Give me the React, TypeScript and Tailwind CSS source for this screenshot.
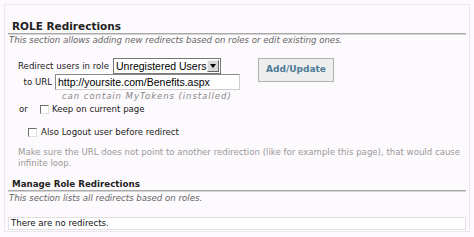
import React from "react";

export default function App() {
  const v = { fontFamily: '"DejaVu Sans", Verdana, sans-serif' };
  const a = { fontFamily: '"Liberation Sans", Arial, sans-serif' };
  return (
    <div className="w-[474px] h-[237px] bg-[#fdfafd] pt-[4px] pl-[4px]" style={v}>
      <div className="w-[466px] h-[228px] border border-[#ebe6eb] pl-[3px] pt-[15px]">
        <div className="text-[10.5px] font-bold text-[#222] pl-[4px] leading-[13px]">ROLE Redirections</div>
        <div className="h-[1px] bg-[#a9a9a9] w-[458px] border-b border-[#d4d4d4] box-content" />
        <div className="text-[8.6px] italic text-[#666] leading-[11px] pl-[1px]">
          This section allows adding new redirects based on roles or edit existing ones.
        </div>
        <div className="flex mt-[12px]">
          <div className="flex flex-col w-[232px]">
            <div className="flex items-center text-[8.6px] text-[#222]">
              <span className="w-[105px] text-right pr-[4px]">Redirect users in role</span>
              <div className="flex items-center h-[16px] w-[108px] border border-[#777] bg-white">
                <span className="flex-1 text-[10.5px] pl-[2px] leading-[14px] text-black" style={a}>Unregistered Users</span>
                <span className="w-[12px] h-[12px] mr-[1px] bg-[#d8d8d8] border border-t-[#f0f0f0] border-l-[#f0f0f0] border-b-[#666] border-r-[#666] flex items-center justify-center">
                  <svg width="6" height="4" viewBox="0 0 6 4"><path d="M0 0h6L3 4z" fill="#000" /></svg>
                </span>
              </div>
            </div>
            <div className="flex items-center text-[8.6px] text-[#222]">
              <span className="w-[47px] text-right pr-[3px]">to URL</span>
              <div className="h-[16px] w-[185px] border border-[#888] border-b-[#ccc] border-r-[#ccc] bg-white text-[10.5px] pl-[2px] leading-[14px] text-black" style={a}>
                http://yoursite.com/Benefits.aspx
              </div>
            </div>
            <div className="text-[8.6px] italic text-[#888] ml-[54px] leading-[11px] mt-[1px] tracking-[0.9px] whitespace-nowrap">can contain MyTokens (installed)</div>
            <div className="flex items-center text-[8.6px] text-[#222] mt-[2px] leading-[11px]">
              <span className="ml-[11px] w-[21px]">or</span>
              <span className="w-[9px] h-[9px] border border-[#707070] border-b-[#e0e0e0] border-r-[#e0e0e0] bg-white mr-[3px]" />
              <span>Keep on current page</span>
            </div>
            <div className="flex items-center text-[8.6px] text-[#222] mt-[12px] leading-[11px]">
              <span className="ml-[20px] w-[9px] h-[9px] border border-[#707070] border-b-[#e0e0e0] border-r-[#e0e0e0] bg-white mr-[4px]" />
              <span>Also Logout user before redirect</span>
            </div>
          </div>
          <div className="ml-[18px]">
            <div className="w-[76px] h-[24px] bg-[#eeeeee] border border-[#b0b0b0] flex items-center justify-center text-[9px] font-bold text-[#4d7a97]">
              Add/Update
            </div>
          </div>
        </div>
        <div className="text-[8.6px] text-[#999] leading-[11px] mt-[9px] ml-[10px] w-[450px]">
          Make sure the URL does not point to another redirection (like for example this page), that would cause infinite loop.
        </div>
        <div className="text-[8.7px] font-bold text-[#222] pl-[4px] leading-[12px] mt-[9px]">Manage Role Redirections</div>
        <div className="h-[1px] bg-[#a9a9a9] w-[458px] border-b border-[#d4d4d4] box-content" />
        <div className="text-[8.6px] italic text-[#666] leading-[11px] mt-[1px] pl-[1px]">
          This section lists all redirects based on roles.
        </div>
        <div className="mt-[13px] w-[458px] h-[13px] border border-[#e3dfe3] bg-white text-[8.6px] text-[#111] leading-[11px] pl-[2px]">
          There are no redirects.
        </div>
      </div>
    </div>
  );
}
